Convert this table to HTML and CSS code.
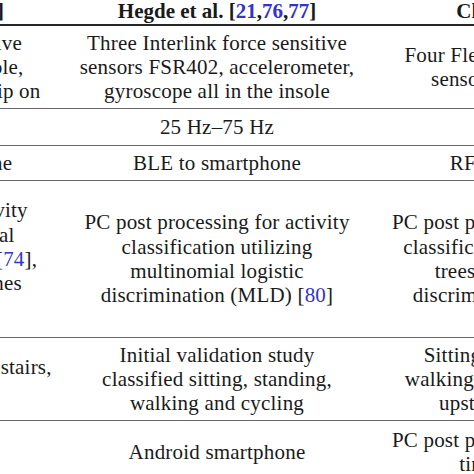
FILE: index.html
```html
<!DOCTYPE html>
<html>
<head>
<meta charset="utf-8">
<link rel="stylesheet" href="styles.css">
</head>
<body>
<div class="page">
  <div class="table">
    <div class="row head">
      <div class="cell">Sazonova et al. [<span class="ref">74</span>]</div>
      <div class="cell">Hegde et al. [<span class="ref">21</span>,<span class="ref">76</span>,<span class="ref">77</span>]</div>
      <div class="cell">Chen et al. [<span class="ref">82</span>]</div>
    </div>
    <div class="row r1">
      <div class="cell">Seven pressure sensitive<br>resistors along its insole,<br>and an accelerometer clip on</div>
      <div class="cell">Three Interlink force sensitive<br>sensors FSR402, accelerometer,<br>gyroscope all in the insole</div>
      <div class="cell">Four FlexiForce A401 force<br>sensors in each insole</div>
    </div>
    <div class="row r2">
      <div class="cell">25 Hz</div>
      <div class="cell">25 Hz–75 Hz</div>
      <div class="cell">100 Hz</div>
    </div>
    <div class="row r3">
      <div class="cell">ZigBee to smartphone</div>
      <div class="cell">BLE to smartphone</div>
      <div class="cell">RF module to PC</div>
    </div>
    <div class="row r4">
      <div class="cell">Real-time app for activity<br>classification in neural<br>networks, naive Bayes [<span class="ref">74</span>],<br>support vector machines<br>(SVM) [<span class="ref">75</span>]</div>
      <div class="cell">PC post processing for activity<br>classification utilizing<br>multinomial logistic<br>discrimination (MLD) [<span class="ref">80</span>]</div>
      <div class="cell">PC post processing for activity<br>classification using decision<br>trees (DT) and linear<br>discriminant analysis [<span class="ref">83</span>]</div>
    </div>
    <div class="row r5">
      <div class="cell">Walking, running, and upstairs,<br>downstairs</div>
      <div class="cell">Initial validation study<br>classified sitting, standing,<br>walking and cycling</div>
      <div class="cell">Sitting, standing, lying,<br>walking, running, climbing,<br>upstairs, downstairs</div>
    </div>
    <div class="row r6">
      <div class="cell">Smartphone app</div>
      <div class="cell">Android smartphone</div>
      <div class="cell">PC post processing for activity<br>timing analysis</div>
    </div>
  </div>
</div>
</body>
</html>
```

FILE: styles.css
```css
html, body {
  margin: 0;
  padding: 0;
  background: #ffffff;
}

.page {
  width: 474px;
  height: 474px;
  overflow: hidden;
  background: #ffffff;
}

.table {
  margin-left: -233px;
  width: 915px;
  font-family: "Liberation Serif", "Times New Roman", serif;
  font-size: 21px;
  line-height: 24.3px;
  letter-spacing: 0.2px;
  color: #1a1a1a;
}

.row {
  display: grid;
  grid-template-columns: 300px 300px 315px;
  border-bottom: 1px solid #6a6a6a;
}

.cell {
  text-align: center;
  align-self: center;
  white-space: nowrap;
}

.ref {
  color: #3434c8;
}

.head {
  margin-top: -1px;
  height: 25px;
  border-bottom: 2px solid #262626;
  font-weight: bold;
  letter-spacing: 0;
}

.head .cell {
  align-self: end;
  padding-bottom: 3px;
}

.r1 { height: 82px; }
.r2 { height: 36px; }
.r3 { height: 34px; }
.r4 { height: 156px; }
.r5 { height: 82px; }
.r6 { height: 62px; border-bottom: none; }
```
